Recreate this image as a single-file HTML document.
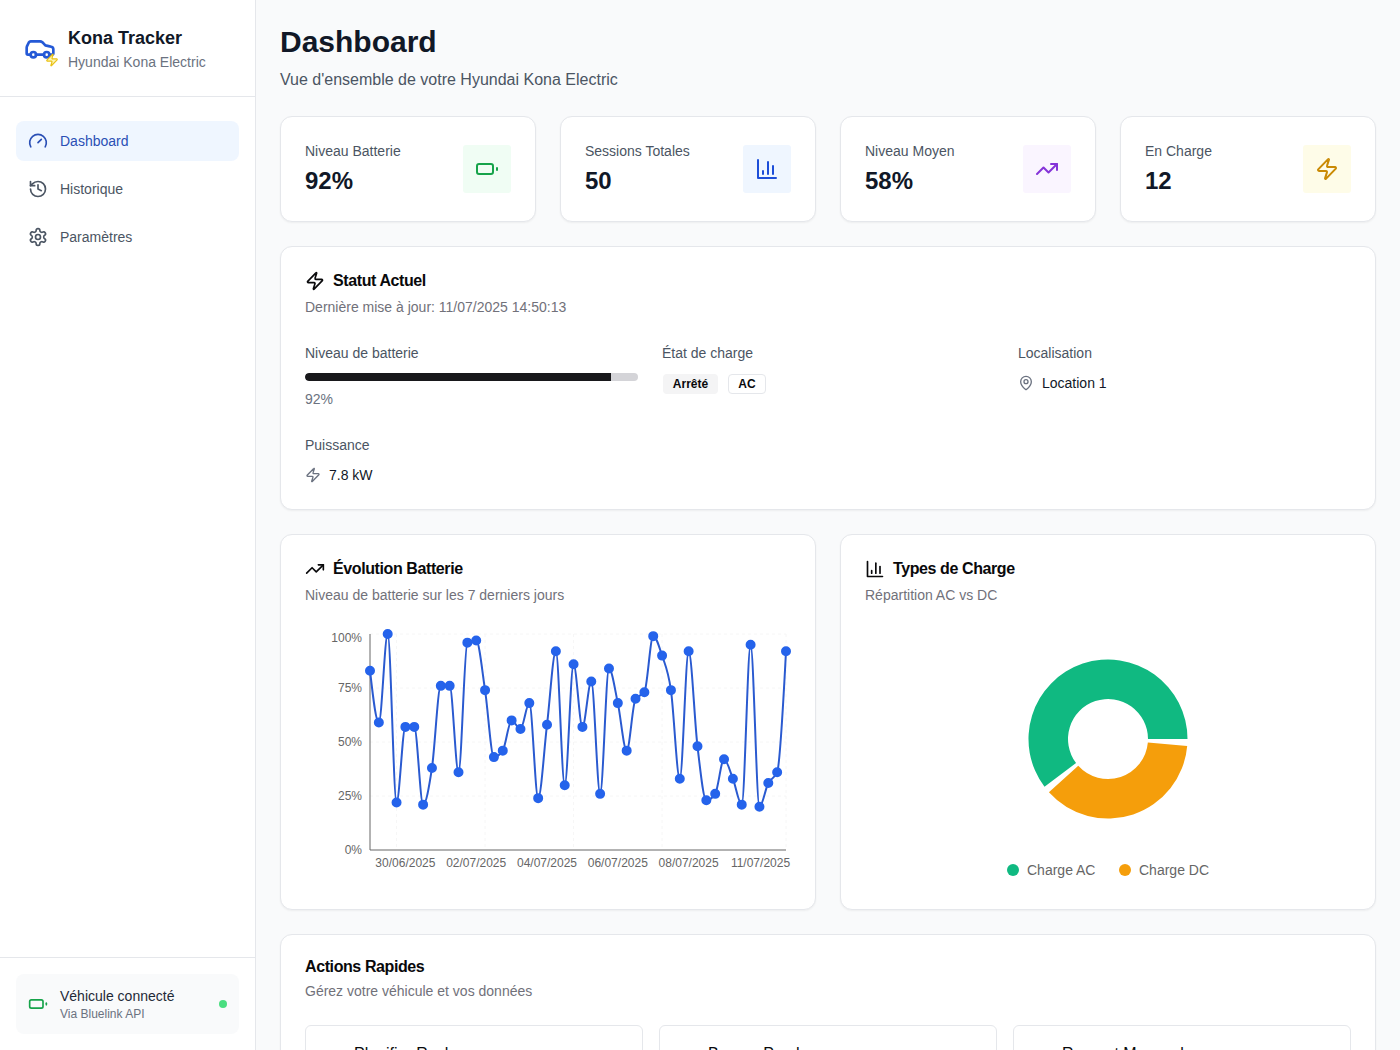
<!DOCTYPE html>
<html lang="fr"><head><meta charset="utf-8"><title>Kona Tracker</title>
<style>
*{box-sizing:border-box;margin:0;padding:0}
html,body{width:1400px;height:1050px;overflow:hidden}
body{font-family:"Liberation Sans",sans-serif;background:#f9fafb;color:#111827;position:relative}
svg.i{fill:none;stroke:currentColor;stroke-width:2;stroke-linecap:round;stroke-linejoin:round;display:block}
.abs{position:absolute}
/* sidebar */
.sb{position:absolute;left:0;top:0;width:256px;height:1050px;background:#fff;border-right:1px solid #e5e7eb}
.sb-head{position:absolute;left:0;top:0;width:255px;height:97px;border-bottom:1px solid #e5e7eb}
.brand{position:absolute;left:68px;top:24px;font-size:18px;font-weight:700;line-height:28px;color:#111827}
.brand-sub{position:absolute;left:68px;top:52px;font-size:14px;line-height:20px;color:#6b7280}
.nav{position:absolute;left:16px;top:121px;width:223px}
.nav a{display:flex;align-items:center;height:40px;padding:0 12px;border-radius:8px;font-size:14px;color:#4b5563;text-decoration:none;margin-bottom:8px}
.nav a svg{margin-right:12px;width:20px;height:20px}
.nav a.act{background:#eff6ff;color:#2a4fb5}
.sb-foot{position:absolute;left:0;top:957px;width:255px;height:93px;border-top:1px solid #e5e7eb}
.conn{position:absolute;left:16px;top:16px;width:223px;height:60px;background:#f9fafb;border-radius:8px}
/* main */
.h1{position:absolute;left:280px;top:24px;font-size:30px;line-height:36px;font-weight:700;color:#111827}
.sub{position:absolute;left:280px;top:68px;font-size:16px;line-height:24px;color:#4b5563}
.card{position:absolute;background:#fff;border:1px solid #e5e7eb;border-radius:12px;box-shadow:0 1px 2px 0 rgba(0,0,0,.05)}
.stat .lbl{position:absolute;left:24px;top:24px;font-size:14px;line-height:20px;color:#4b5563}
.stat .val{position:absolute;left:24px;top:48px;font-size:24px;line-height:32px;font-weight:700;color:#111827}
.stat .ib{position:absolute;left:182px;top:28px;width:48px;height:48px;border-radius:3px;display:flex;align-items:center;justify-content:center}
.ct{font-size:16px;line-height:16px;font-weight:700;letter-spacing:-0.4px;color:#09090b}
.cd{font-size:14px;line-height:20px;color:#71717a}
.lab{font-size:14px;line-height:20px;color:#4b5563}
.badge{display:flex;align-items:center;justify-content:center;height:20px;padding:0;border-radius:4px;font-size:12px;font-weight:700;color:#09090b}
</style></head><body>
<div class="sb">
  <div class="sb-head">
    <svg class="i abs" style="left:24px;top:32px;color:#2459d6;stroke-width:2" width="32" height="32" viewBox="0 0 24 24"><path d="M19 17h2c.6 0 1-.4 1-1v-3c0-.9-.7-1.7-1.5-1.9C18.7 10.6 16 10 16 10s-1.3-1.4-2.2-2.3c-.5-.4-1.1-.7-1.8-.7H5c-.6 0-1.1.4-1.4.9l-1.4 2.9A3.7 3.7 0 0 0 2 12v4c0 .6.4 1 1 1h2"/><circle cx="7" cy="17" r="2"/><path d="M9 17h6"/><circle cx="17" cy="17" r="2"/></svg>
    <svg class="i abs" style="left:45px;top:53px;color:#eac117;fill:#fdf6b2" width="14" height="14" viewBox="0 0 24 24"><path d="M4 14a1 1 0 0 1-.78-1.63l9.9-10.2a.5.5 0 0 1 .86.46l-1.92 6.02A1 1 0 0 0 13 10h7a1 1 0 0 1 .78 1.63l-9.9 10.2a.5.5 0 0 1-.86-.46l1.92-6.02A1 1 0 0 0 11 14z"/></svg>
    <div class="brand">Kona Tracker</div>
    <div class="brand-sub">Hyundai Kona Electric</div>
  </div>
  <div class="nav">
    <a class="act"><svg class="i" viewBox="0 0 24 24"><path d="m12 14 4-4"/><path d="M3.34 19a10 10 0 1 1 17.32 0"/></svg>Dashboard</a>
    <a><svg class="i" viewBox="0 0 24 24"><path d="M3 12a9 9 0 1 0 9-9 9.75 9.75 0 0 0-6.74 2.74L3 8"/><path d="M3 3v5h5"/><path d="M12 7v5l4 2"/></svg>Historique</a>
    <a><svg class="i" viewBox="0 0 24 24"><path d="M12.22 2h-.44a2 2 0 0 0-2 2v.18a2 2 0 0 1-1 1.73l-.43.25a2 2 0 0 1-2 0l-.15-.08a2 2 0 0 0-2.73.73l-.22.38a2 2 0 0 0 .73 2.73l.15.1a2 2 0 0 1 1 1.72v.51a2 2 0 0 1-1 1.74l-.15.09a2 2 0 0 0-.73 2.73l.22.38a2 2 0 0 0 2.73.73l.15-.08a2 2 0 0 1 2 0l.43.25a2 2 0 0 1 1 1.73V20a2 2 0 0 0 2 2h.44a2 2 0 0 0 2-2v-.18a2 2 0 0 1 1-1.73l.43-.25a2 2 0 0 1 2 0l.15.08a2 2 0 0 0 2.73-.73l.22-.39a2 2 0 0 0-.73-2.73l-.15-.08a2 2 0 0 1-1-1.74v-.5a2 2 0 0 1 1-1.74l.15-.09a2 2 0 0 0 .73-2.73l-.22-.38a2 2 0 0 0-2.73-.73l-.15.08a2 2 0 0 1-2 0l-.43-.25a2 2 0 0 1-1-1.73V4a2 2 0 0 0-2-2z"/><circle cx="12" cy="12" r="3"/></svg>Paramètres</a>
  </div>
  <div class="sb-foot">
    <div class="conn">
      <svg class="i abs" style="left:12px;top:20px;color:#16a34a" width="20" height="20" viewBox="0 0 24 24"><rect width="16" height="10" x="2" y="7" rx="2" ry="2"/><line x1="22" x2="22" y1="11" y2="13"/></svg>
      <div class="abs" style="left:44px;top:12px;font-size:14px;line-height:20px;color:#1f2937">Véhicule connecté</div>
      <div class="abs" style="left:44px;top:32px;font-size:12px;line-height:16px;color:#6b7280">Via Bluelink API</div>
      <div class="abs" style="left:203px;top:26px;width:8px;height:8px;border-radius:50%;background:#4ade80"></div>
    </div>
  </div>
</div>

<div class="h1">Dashboard</div>
<div class="sub">Vue d'ensemble de votre Hyundai Kona Electric</div>

<div class="card stat" style="left:280px;top:116px;width:256px;height:106px">
  <div class="lbl">Niveau Batterie</div><div class="val">92%</div>
  <div class="ib" style="background:#f0fdf4;color:#16a34a"><svg class="i" width="24" height="24" viewBox="0 0 24 24"><rect width="16" height="10" x="2" y="7" rx="2" ry="2"/><line x1="22" x2="22" y1="11" y2="13"/></svg></div>
</div>
<div class="card stat" style="left:560px;top:116px;width:256px;height:106px">
  <div class="lbl">Sessions Totales</div><div class="val">50</div>
  <div class="ib" style="background:#eff6ff;color:#1d4ed8"><svg class="i" width="24" height="24" viewBox="0 0 24 24"><path d="M3 3v18h18"/><path d="M18 17V9"/><path d="M13 17V5"/><path d="M8 17v-3"/></svg></div>
</div>
<div class="card stat" style="left:840px;top:116px;width:256px;height:106px">
  <div class="lbl">Niveau Moyen</div><div class="val">58%</div>
  <div class="ib" style="background:#faf5ff;color:#8534d8"><svg class="i" width="24" height="24" viewBox="0 0 24 24"><polyline points="22 7 13.5 15.5 8.5 10.5 2 17"/><polyline points="16 7 22 7 22 13"/></svg></div>
</div>
<div class="card stat" style="left:1120px;top:116px;width:256px;height:106px">
  <div class="lbl">En Charge</div><div class="val">12</div>
  <div class="ib" style="background:#fefce8;color:#ca8a04"><svg class="i" width="24" height="24" viewBox="0 0 24 24"><path d="M4 14a1 1 0 0 1-.78-1.63l9.9-10.2a.5.5 0 0 1 .86.46l-1.92 6.02A1 1 0 0 0 13 10h7a1 1 0 0 1 .78 1.63l-9.9 10.2a.5.5 0 0 1-.86-.46l1.92-6.02A1 1 0 0 0 11 14z"/></svg></div>
</div>

<!-- Statut actuel -->
<div class="card" style="left:280px;top:246px;width:1096px;height:264px">
  <svg class="i abs" style="left:24px;top:24px;color:#09090b" width="20" height="20" viewBox="0 0 24 24"><path d="M4 14a1 1 0 0 1-.78-1.63l9.9-10.2a.5.5 0 0 1 .86.46l-1.92 6.02A1 1 0 0 0 13 10h7a1 1 0 0 1 .78 1.63l-9.9 10.2a.5.5 0 0 1-.86-.46l1.92-6.02A1 1 0 0 0 11 14z"/></svg>
  <div class="ct abs" style="left:52px;top:26px">Statut Actuel</div>
  <div class="cd abs" style="left:24px;top:50px">Dernière mise à jour: 11/07/2025 14:50:13</div>

  <div class="lab abs" style="left:24px;top:96px">Niveau de batterie</div>
  <div class="abs" style="left:24px;top:126px;width:333px;height:8px;border-radius:4px;background:#d4d4d8;overflow:hidden"><div style="width:92%;height:8px;background:#18181b;border-radius:4px 0 0 4px"></div></div>
  <div class="abs" style="left:24px;top:142px;font-size:14px;line-height:20px;color:#6b7280">92%</div>

  <div class="lab abs" style="left:381px;top:96px">État de charge</div>
  <span class="badge abs" style="left:382px;top:127px;width:55px;background:#f4f4f5;border:1px solid transparent">Arrêté</span>
  <span class="badge abs" style="left:447px;top:127px;width:38px;background:#fff;border:1px solid #e5e7eb">AC</span>

  <div class="lab abs" style="left:737px;top:96px">Localisation</div>
  <svg class="i abs" style="left:737px;top:128px;color:#6b7280" width="16" height="16" viewBox="0 0 24 24"><path d="M20 10c0 4.993-5.539 10.193-7.399 11.799a1 1 0 0 1-1.202 0C9.539 20.193 4 14.993 4 10a8 8 0 0 1 16 0"/><circle cx="12" cy="10" r="3"/></svg>
  <div class="abs" style="left:761px;top:126px;font-size:14px;line-height:20px;color:#111827">Location 1</div>

  <div class="lab abs" style="left:24px;top:188px">Puissance</div>
  <svg class="i abs" style="left:24px;top:220px;color:#6b7280" width="16" height="16" viewBox="0 0 24 24"><path d="M4 14a1 1 0 0 1-.78-1.63l9.9-10.2a.5.5 0 0 1 .86.46l-1.92 6.02A1 1 0 0 0 13 10h7a1 1 0 0 1 .78 1.63l-9.9 10.2a.5.5 0 0 1-.86-.46l1.92-6.02A1 1 0 0 0 11 14z"/></svg>
  <div class="abs" style="left:48px;top:218px;font-size:14px;line-height:20px;color:#111827">7.8 kW</div>
</div>

<!-- Evolution -->
<div class="card" style="left:280px;top:534px;width:536px;height:376px">
  <svg class="i abs" style="left:24px;top:24px;color:#09090b" width="20" height="20" viewBox="0 0 24 24"><polyline points="22 7 13.5 15.5 8.5 10.5 2 17"/><polyline points="16 7 22 7 22 13"/></svg>
  <div class="ct abs" style="left:52px;top:26px">Évolution Batterie</div>
  <div class="cd abs" style="left:24px;top:50px">Niveau de batterie sur les 7 derniers jours</div>
</div>

<!-- Types -->
<div class="card" style="left:840px;top:534px;width:536px;height:376px">
  <svg class="i abs" style="left:24px;top:24px;color:#09090b" width="20" height="20" viewBox="0 0 24 24"><path d="M3 3v18h18"/><path d="M18 17V9"/><path d="M13 17V5"/><path d="M8 17v-3"/></svg>
  <div class="ct abs" style="left:52px;top:26px">Types de Charge</div>
  <div class="cd abs" style="left:24px;top:50px">Répartition AC vs DC</div>
  <div class="abs" style="left:166px;top:329px;width:12px;height:12px;border-radius:50%;background:#10b981"></div>
  <div class="abs" style="left:186px;top:325px;font-size:14px;line-height:20px;color:#666">Charge AC</div>
  <div class="abs" style="left:278px;top:329px;width:12px;height:12px;border-radius:50%;background:#f59e0b"></div>
  <div class="abs" style="left:298px;top:325px;font-size:14px;line-height:20px;color:#666">Charge DC</div>
</div>

<!-- Actions -->
<div class="card" style="left:280px;top:934px;width:1096px;height:300px">
  <div class="ct abs" style="left:24px;top:24px">Actions Rapides</div>
  <div class="cd abs" style="left:24px;top:46px">Gérez votre véhicule et vos données</div>
  <div class="abs" style="left:24px;top:90px;width:338px;height:80px;border:1px solid #e5e7eb;border-radius:6px"><div class="abs" style="left:48px;top:16px;font-size:16px;line-height:24px;color:#09090b">Planifier Recharge</div></div>
  <div class="abs" style="left:378px;top:90px;width:338px;height:80px;border:1px solid #e5e7eb;border-radius:6px"><div class="abs" style="left:48px;top:16px;font-size:16px;line-height:24px;color:#09090b">Bornes Proches</div></div>
  <div class="abs" style="left:732px;top:90px;width:338px;height:80px;border:1px solid #e5e7eb;border-radius:6px"><div class="abs" style="left:48px;top:16px;font-size:16px;line-height:24px;color:#09090b">Rapport Mensuel</div></div>
</div>

<svg class="abs" style="left:0;top:0" width="1400" height="1050" viewBox="0 0 1400 1050">
  <g stroke="#f6f6f6" stroke-dasharray="3 3" fill="none">
    <line x1="370" y1="634" x2="786" y2="634"/><line x1="370" y1="688" x2="786" y2="688"/><line x1="370" y1="742" x2="786" y2="742"/><line x1="370" y1="796" x2="786" y2="796"/>
    <line x1="396.5" y1="634" x2="396.5" y2="850"/><line x1="485" y1="634" x2="485" y2="850"/><line x1="573.5" y1="634" x2="573.5" y2="850"/><line x1="662" y1="634" x2="662" y2="850"/><line x1="786" y1="634" x2="786" y2="850"/>
  </g>
  <g stroke="#666" fill="none"><line x1="370" y1="634" x2="370" y2="850"/><line x1="370" y1="850" x2="786" y2="850"/></g>
  <g font-family="Liberation Sans, sans-serif" font-size="12" fill="#666" text-anchor="end">
    <text x="362" y="641.5">100%</text><text x="362" y="692">75%</text><text x="362" y="746">50%</text><text x="362" y="800">25%</text><text x="362" y="854">0%</text>
  </g>
  <g font-family="Liberation Sans, sans-serif" font-size="12" fill="#666" text-anchor="middle">
    <text x="405.4" y="866.5">30/06/2025</text><text x="476.2" y="866.5">02/07/2025</text><text x="547" y="866.5">04/07/2025</text><text x="617.8" y="866.5">06/07/2025</text><text x="688.6" y="866.5">08/07/2025</text><text x="760.5" y="866.5">11/07/2025</text>
  </g>
  <path d="M370.00,670.72C372.95,696.64,375.90,722.56,378.85,722.56C381.80,722.56,384.75,634.00,387.70,634.00C390.65,634.00,393.60,802.48,396.55,802.48C399.50,802.48,402.45,726.88,405.40,726.88C408.35,726.88,411.30,726.88,414.26,726.88C417.21,726.88,420.16,804.64,423.11,804.64C426.06,804.64,429.01,787.72,431.96,767.92C434.91,748.12,437.86,685.84,440.81,685.84C443.76,685.84,446.71,685.84,449.66,685.84C452.61,685.84,455.56,772.24,458.51,772.24C461.46,772.24,464.41,644.08,467.36,642.64C470.31,641.20,473.26,640.48,476.21,640.48C479.16,640.48,482.11,670.72,485.06,690.16C488.01,709.60,490.96,757.12,493.91,757.12C496.87,757.12,499.82,754.96,502.77,750.64C505.72,746.32,508.67,720.40,511.62,720.40C514.57,720.40,517.52,729.04,520.47,729.04C523.42,729.04,526.37,703.12,529.32,703.12C532.27,703.12,535.22,798.16,538.17,798.16C541.12,798.16,544.07,749.20,547.02,724.72C549.97,700.24,552.92,651.28,555.87,651.28C558.82,651.28,561.77,785.20,564.72,785.20C567.67,785.20,570.62,664.24,573.57,664.24C576.52,664.24,579.48,726.88,582.43,726.88C585.38,726.88,588.33,681.52,591.28,681.52C594.23,681.52,597.18,793.84,600.13,793.84C603.08,793.84,606.03,668.56,608.98,668.56C611.93,668.56,614.88,689.44,617.83,703.12C620.78,716.80,623.73,750.64,626.68,750.64C629.63,750.64,632.58,703.12,635.53,698.80C638.48,694.48,641.43,696.64,644.38,692.32C647.33,688.00,650.28,636.16,653.23,636.16C656.18,636.16,659.13,646.60,662.09,655.60C665.04,664.60,667.99,669.64,670.94,690.16C673.89,710.68,676.84,778.72,679.79,778.72C682.74,778.72,685.69,651.28,688.64,651.28C691.59,651.28,694.54,721.48,697.49,746.32C700.44,771.16,703.39,800.32,706.34,800.32C709.29,800.32,712.24,798.16,715.19,793.84C718.14,789.52,721.09,759.28,724.04,759.28C726.99,759.28,729.94,771.16,732.89,778.72C735.84,786.28,738.79,804.64,741.74,804.64C744.70,804.64,747.65,644.80,750.60,644.80C753.55,644.80,756.50,806.80,759.45,806.80C762.40,806.80,765.35,788.80,768.30,783.04C771.25,777.28,774.20,779.44,777.15,772.24C780.10,765.04,783.05,708.16,786.00,651.28" fill="none" stroke="#2a5ad0" stroke-width="2"/>
  <g fill="#2563eb" stroke="#2563eb" stroke-width="2"><circle cx="370.00" cy="670.72" r="4"/><circle cx="378.85" cy="722.56" r="4"/><circle cx="387.70" cy="634.00" r="4"/><circle cx="396.55" cy="802.48" r="4"/><circle cx="405.40" cy="726.88" r="4"/><circle cx="414.26" cy="726.88" r="4"/><circle cx="423.11" cy="804.64" r="4"/><circle cx="431.96" cy="767.92" r="4"/><circle cx="440.81" cy="685.84" r="4"/><circle cx="449.66" cy="685.84" r="4"/><circle cx="458.51" cy="772.24" r="4"/><circle cx="467.36" cy="642.64" r="4"/><circle cx="476.21" cy="640.48" r="4"/><circle cx="485.06" cy="690.16" r="4"/><circle cx="493.91" cy="757.12" r="4"/><circle cx="502.77" cy="750.64" r="4"/><circle cx="511.62" cy="720.40" r="4"/><circle cx="520.47" cy="729.04" r="4"/><circle cx="529.32" cy="703.12" r="4"/><circle cx="538.17" cy="798.16" r="4"/><circle cx="547.02" cy="724.72" r="4"/><circle cx="555.87" cy="651.28" r="4"/><circle cx="564.72" cy="785.20" r="4"/><circle cx="573.57" cy="664.24" r="4"/><circle cx="582.43" cy="726.88" r="4"/><circle cx="591.28" cy="681.52" r="4"/><circle cx="600.13" cy="793.84" r="4"/><circle cx="608.98" cy="668.56" r="4"/><circle cx="617.83" cy="703.12" r="4"/><circle cx="626.68" cy="750.64" r="4"/><circle cx="635.53" cy="698.80" r="4"/><circle cx="644.38" cy="692.32" r="4"/><circle cx="653.23" cy="636.16" r="4"/><circle cx="662.09" cy="655.60" r="4"/><circle cx="670.94" cy="690.16" r="4"/><circle cx="679.79" cy="778.72" r="4"/><circle cx="688.64" cy="651.28" r="4"/><circle cx="697.49" cy="746.32" r="4"/><circle cx="706.34" cy="800.32" r="4"/><circle cx="715.19" cy="793.84" r="4"/><circle cx="724.04" cy="759.28" r="4"/><circle cx="732.89" cy="778.72" r="4"/><circle cx="741.74" cy="804.64" r="4"/><circle cx="750.60" cy="644.80" r="4"/><circle cx="759.45" cy="806.80" r="4"/><circle cx="768.30" cy="783.04" r="4"/><circle cx="777.15" cy="772.24" r="4"/><circle cx="786.00" cy="651.28" r="4"/></g>
  <path d="M1187.50,739.00A79.5,79.5,0,1,0,1044.51,786.84L1076.05,763.07A40,40,0,1,1,1148.00,739.00Z" fill="#10b981"/>
  <path d="M1048.92,792.20A79.5,79.5,0,0,0,1187.20,745.93L1147.85,742.49A40,40,0,0,1,1078.27,765.77Z" fill="#f59e0b"/>
</svg>
</body></html>
